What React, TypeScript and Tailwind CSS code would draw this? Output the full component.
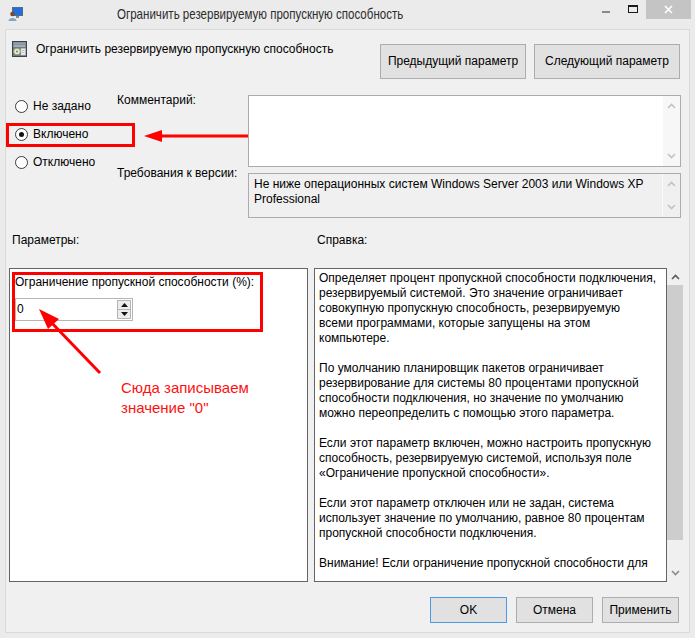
import React from 'react';

const helpLines: string[] = [
  'Определяет процент пропускной способности подключения,',
  'резервируемый системой. Это значение ограничивает',
  'совокупную пропускную способность, резервируемую',
  'всеми программами, которые запущены на этом',
  'компьютере.',
  '',
  'По умолчанию планировщик пакетов ограничивает',
  'резервирование для системы 80 процентами пропускной',
  'способности подключения, но значение по умолчанию',
  'можно переопределить с помощью этого параметра.',
  '',
  'Если этот параметр включен, можно настроить пропускную',
  'способность, резервируемую системой, используя поле',
  '«Ограничение пропускной способности».',
  '',
  'Если этот параметр отключен или не задан, система',
  'использует значение по умолчанию, равное 80 процентам',
  'пропускной способности подключения.',
  '',
  'Внимание! Если ограничение пропускной способности для',
];

function Chevron({ up }: { up?: boolean }) {
  return (
    <svg width="9" height="6" viewBox="0 0 9 6" className="block">
      <path
        d={up ? 'M1 5 L4.5 1.5 L8 5' : 'M1 1 L4.5 4.5 L8 1'}
        fill="none"
        stroke="currentColor"
        strokeWidth="1.6"
      />
    </svg>
  );
}

function Radio({ label, checked }: { label: string; checked?: boolean }) {
  return (
    <div className="flex h-[28px] items-center gap-[5px]">
      <span className="flex h-[13px] w-[13px] items-center justify-center rounded-full border border-[#3c3c3c] bg-white">
        {checked && <span className="h-[5px] w-[5px] rounded-full bg-[#111]" />}
      </span>
      <span>{label}</span>
    </div>
  );
}

function Button({ children, w, h, focused }: { children: React.ReactNode; w: string; h: string; focused?: boolean }) {
  return (
    <button
      className={`${w} ${h} flex items-center justify-center border bg-[#e1e1e1] ${
        focused ? 'border-[#4a9be6]' : 'border-[#adadad]'
      }`}
    >
      {children}
    </button>
  );
}

function TitleIcon() {
  return (
    <svg width="16" height="16" viewBox="0 0 16 16">
      <rect x="4" y="1" width="11" height="9" fill="#5a6b80" />
      <rect x="5" y="2" width="9" height="7" fill="#1f6fe0" />
      <rect x="8" y="10" width="3" height="2" fill="#7a8796" />
      <circle cx="4.5" cy="8" r="2.3" fill="#7a4a2a" />
      <path d="M0.5 15 C0.5 11 8.5 11 8.5 15 Z" fill="#7fa7c9" />
    </svg>
  );
}

function PolicyIcon() {
  return (
    <svg width="15" height="16" viewBox="0 0 15 16">
      <rect x="0.5" y="0.5" width="14" height="15" fill="#6f7c86" stroke="#3e464c" />
      <rect x="1.5" y="1.5" width="12" height="2" fill="#9aa6ae" />
      <rect x="1.5" y="4.5" width="12" height="1" fill="#d8dde0" />
      <circle cx="5" cy="10.5" r="3.3" fill="#e6ecd2" stroke="#8a9a5a" strokeWidth="0.8" />
      <circle cx="5" cy="10.5" r="1" fill="#6f7c86" />
      <rect x="9" y="7.5" width="4.5" height="6.5" fill="#f3f3f3" stroke="#b8b8b8" strokeWidth="0.6" />
      <rect x="10" y="9" width="2.5" height="0.8" fill="#9aa" />
      <rect x="10" y="11" width="2.5" height="0.8" fill="#9aa" />
    </svg>
  );
}

export default function App() {
  return (
    <div className="relative h-[638px] w-[695px] overflow-hidden bg-[#ebebeb] font-['Liberation_Sans',Arial,sans-serif] text-[12px] leading-[15px] text-black">
      {/* title bar */}
      <div className="relative flex h-[29px] items-start">
        <div className="ml-[8px] mt-[6px]">
          <TitleIcon />
        </div>
        <div className="ml-[93px] mt-[5px] w-[290px] whitespace-nowrap">
          <span className="inline-block origin-left scale-x-[0.77] text-[15px] leading-[18px] text-[#2d2d2d]">
            Ограничить резервируемую пропускную способность
          </span>
        </div>
        <div className="ml-auto flex items-start">
          <div className="mr-[18px] mt-[11px] h-[2px] w-[8px] bg-[#8a8a8a]" />
          <div className="mr-[8px] mt-[5px] h-[8px] w-[10px] border border-t-[2px] border-[#1a1a1a]" />
          <div className="mr-[4px] flex h-[19px] w-[45px] items-center justify-center bg-[#c4c4c4]">
            <svg width="9" height="9" viewBox="0 0 9 9">
              <path d="M1 1 L8 8 M8 1 L1 8" stroke="#fff" strokeWidth="1.6" />
            </svg>
          </div>
        </div>
      </div>

      {/* body */}
      <div className="mx-[5px] h-[604px] border border-[#dadada] bg-[#f0f0f0]">
        {/* top row */}
        <div className="flex items-start justify-between pl-[6px] pr-[9px]">
          <div className="flex items-center pt-[11px]">
            <PolicyIcon />
            <span className="ml-[9px]">Ограничить резервируемую пропускную способность</span>
          </div>
          <div className="flex gap-[8px] pt-[14px]">
            <Button w="w-[146px]" h="h-[35px]">Предыдущий параметр</Button>
            <Button w="w-[146px]" h="h-[35px]">Следующий параметр</Button>
          </div>
        </div>

        {/* state + comment */}
        <div className="relative mt-[13px] flex">
          <div className="relative w-[105px] pl-[9px]">
            <Radio label="Не задано" />
            <Radio label="Включено" checked />
            <Radio label="Отключено" />
            <div className="absolute left-0 top-[31px] h-[24px] w-[129px] border-[3px] border-[#ff0000]" />
          </div>
          <div className="w-[137px] pl-[6px]">
            <div className="mt-[1px]">Комментарий:</div>
            <div className="mt-[58px]">Требования к версии:</div>
          </div>
          <div className="w-[433px]">
            <div className="mt-[3px] flex h-[72px] border border-[#acacac] bg-white">
              <div className="flex-1" />
              <div className="flex w-[17px] flex-col items-center justify-between bg-[#f7f7f7] py-[7px] text-[#c2c2c2]">
                <Chevron up />
                <Chevron />
              </div>
            </div>
            <div className="mt-[6px] flex h-[45px] border border-[#acacac] bg-[#f0f0f0]">
              <div className="flex-1 pl-[5px] pt-[3px] leading-[15px]">
                Не ниже операционных систем Windows Server 2003 или Windows XP
                <br />
                Professional
              </div>
              <div className="flex w-[18px] flex-col items-center justify-between border-l border-[#fafafa] py-[7px] text-[#c2c2c2]">
                <Chevron up />
                <Chevron />
              </div>
            </div>
          </div>
          <svg className="absolute left-[130px] top-[36px]" width="116" height="16" viewBox="0 0 116 16">
            <path d="M112 8 L22 8" stroke="#ff0000" strokeWidth="3" />
            <path d="M8 8 L26 2 L26 14 Z" fill="#ff0000" />
          </svg>
        </div>

        {/* section labels */}
        <div className="mt-[15px] flex">
          <div className="w-[311px] pl-[6px]">Параметры:</div>
          <div>Справка:</div>
        </div>

        {/* panels */}
        <div className="mt-[20px] flex pl-[3px]">
          <div className="relative h-[314px] w-[299px] border border-[#646464] bg-white">
            <div className="pl-[5px] pt-[6px]">
              <div>Ограничение пропускной способности (%):</div>
              <div className="mt-[8px] flex h-[23px] w-[118px] items-center border border-[#b5b5b5] bg-white pl-[1px] pr-[1px]">
                <span className="flex-1">0</span>
                <div className="flex h-[19px] w-[14px] flex-col border border-[#b5b5b5]">
                  <div className="flex flex-1 items-center justify-center border-b border-[#b5b5b5] bg-[#ececec]">
                    <svg width="7" height="4" viewBox="0 0 7 4">
                      <path d="M0 4 L3.5 0 L7 4 Z" fill="#111" />
                    </svg>
                  </div>
                  <div className="flex flex-1 items-center justify-center bg-[#ececec]">
                    <svg width="7" height="4" viewBox="0 0 7 4">
                      <path d="M0 0 L3.5 4 L7 0 Z" fill="#111" />
                    </svg>
                  </div>
                </div>
              </div>
            </div>
            <div className="absolute left-[2px] top-[3px] h-[60px] w-[251px] border-[3px] border-[#ff0000]" />
            <svg className="absolute left-0 top-0" width="297" height="312" viewBox="0 0 297 312">
              <path d="M90 104 L38 50" stroke="#ff0000" strokeWidth="3" />
              <path d="M29 40 L49 50 L38 60 Z" fill="#ff0000" />
            </svg>
            <div className="absolute left-[111px] top-[109px] text-[15px] leading-[20px] text-[#ff1010]">
              Сюда записываем
              <br />
              значение "0"
            </div>
          </div>
          <div className="ml-[6px] h-[314px] w-[353px] border border-[#646464] bg-white pl-[4px] pt-[2px]">
            {helpLines.map((line, i) => (
              <div key={i} className="h-[15px] whitespace-nowrap">
                {line}
              </div>
            ))}
          </div>
          <div className="flex h-[314px] w-[16px] flex-col items-center">
            <div className="flex h-[17px] items-center text-[#5a5a5a]">
              <Chevron up />
            </div>
            <div className="h-[255px] w-full bg-[#cdcdcd]" />
            <div className="flex flex-1 items-end pb-[6px] text-[#8a8a8a]">
              <Chevron />
            </div>
          </div>
        </div>

        {/* dialog buttons */}
        <div className="mt-[15px] flex justify-end gap-[9px] pr-[10px]">
          <Button w="w-[77px]" h="h-[26px]" focused>OK</Button>
          <Button w="w-[77px]" h="h-[26px]">Отмена</Button>
          <Button w="w-[77px]" h="h-[26px]">Применить</Button>
        </div>
      </div>
    </div>
  );
}
